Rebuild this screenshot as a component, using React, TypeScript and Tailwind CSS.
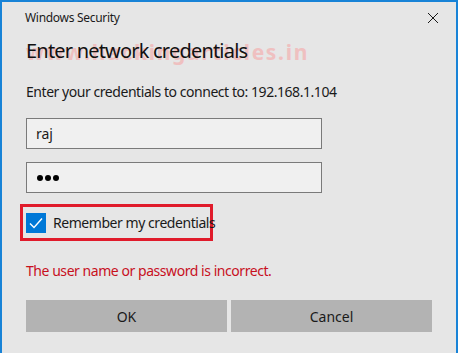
const FONT = "font-['Segoe_UI','Noto_Sans','Open_Sans',sans-serif]";

function CloseIcon() {
	return (
		<svg width="12" height="12" viewBox="0 0 12 12" className="text-[#1a1a1a]">
			<path d="M1 1 L11 11 M11 1 L1 11" stroke="currentColor" strokeWidth="1" fill="none" />
		</svg>
	);
}

function CheckBox() {
	return (
		<span className="flex h-[20px] w-[20px] shrink-0 items-center justify-center bg-[#0078d7]">
			<svg width="14" height="12" viewBox="0 0 14 12">
				<path d="M1 6.5 L5 10.5 L13 1.5" stroke="white" strokeWidth="1.4" fill="none" />
			</svg>
		</span>
	);
}

export default function App() {
	return (
		<div className={`${FONT} h-[353px] w-[458px] border-x-2 border-t-2 border-[#1883d7] bg-[#e6e6e6] text-[#1a1a1a]`}>
			{/* Title bar */}
			<div className="flex h-[31px] items-center justify-between pl-[23px] pr-[17px]">
				<span className="text-[12px] leading-none tracking-[-0.3px]">Windows Security</span>
				<CloseIcon />
			</div>

			<div className="px-[24px]">
				{/* Heading with watermark behind */}
				<div className="relative mt-[2px] h-[32px]">
					<span className="absolute left-0 top-[2px] whitespace-nowrap text-[21px] font-bold tracking-[1.7px] text-[#efc0c0] leading-[30px]">
						www.hackingarticles.in
					</span>
					<h1 className="relative text-[20px] leading-[32px] tracking-[-0.8px] text-[#111]">
						Enter network credentials
					</h1>
				</div>

				<p className="mt-[16px] text-[14px] leading-[18px] tracking-[-0.45px]">
					Enter your credentials to connect to: 192.168.1.104
				</p>

				<div className="mt-[17px] flex flex-col gap-[13px]">
					<div className="flex h-[31px] w-[296px] items-center border border-[#7a7a7a] bg-[#f0f0f0] px-[9px] text-[14px]">
						raj
					</div>
					<div className="flex h-[31px] w-[296px] items-center gap-[2px] border border-[#7a7a7a] bg-[#f0f0f0] px-[10px]">
						<span className="h-[6px] w-[6px] rounded-full bg-black" />
						<span className="h-[6px] w-[6px] rounded-full bg-black" />
						<span className="h-[6px] w-[6px] rounded-full bg-black" />
					</div>
				</div>

				{/* Highlighted checkbox row */}
				<div className="-ml-[6px] mt-[11px] flex h-[37px] w-[193px] items-center gap-[7px] border-[3px] border-[#e01b2b] pl-[3px]">
					<CheckBox />
					<span className="whitespace-nowrap text-[14px] tracking-[-0.45px]">Remember my credentials</span>
				</div>

				<p className="mt-[21px] text-[14px] leading-[18px] tracking-[-0.45px] text-[#c8101e]">
					The user name or password is incorrect.
				</p>

				<div className="mt-[20px] flex gap-[4px]">
					<button className="h-[32px] w-[201px] bg-[#b3b3b3] text-[14px]">OK</button>
					<button className="h-[32px] w-[201px] bg-[#b3b3b3] text-[14px]">Cancel</button>
				</div>
			</div>
		</div>
	);
}
